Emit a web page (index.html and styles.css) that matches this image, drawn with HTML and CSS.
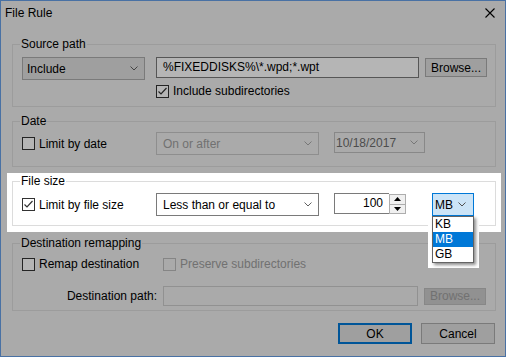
FILE: index.html
```html
<!DOCTYPE html>
<html>
<head>
<meta charset="utf-8">
<title>File Rule</title>
<link rel="stylesheet" href="styles.css">
</head>
<body>
<div class="window">
  <div class="titlebar">
    <span class="title">File Rule</span>
    <svg class="close" width="10" height="10" viewBox="0 0 10 10"><path d="M0.5 0.5 L9.5 9.5 M9.5 0.5 L0.5 9.5" stroke="#000" stroke-width="1.1" fill="none"/></svg>
  </div>

  <div class="group g-source">
    <div class="legend">Source path</div>
    <div class="row r-src1">
      <div class="combo c-include"><span>Include</span><svg class="chev" width="8" height="5" viewBox="0 0 8 5"><path d="M0.5 0.5 L4 4 L7.5 0.5" stroke="#606060" fill="none"/></svg></div>
      <div class="textbox t-path">%FIXEDDISKS%\*.wpd;*.wpt</div>
      <div class="button b-browse">Browse...</div>
    </div>
    <div class="row r-src2">
      <div class="check c-subdirs"><span class="box"><svg width="11" height="11" viewBox="0 0 11 11"><path d="M1.5 5.5 L4 8 L9.5 2" stroke="#333" stroke-width="1.2" fill="none"/></svg></span><span>Include subdirectories</span></div>
    </div>
  </div>

  <div class="group g-date">
    <div class="legend">Date</div>
    <div class="row r-date">
      <div class="check c-first"><span class="box"></span><span>Limit by date</span></div>
      <div class="combo c-cond disabled"><span>On or after</span><svg class="chev" width="8" height="5" viewBox="0 0 8 5"><path d="M0.5 0.5 L4 4 L7.5 0.5" stroke="#a8a8a8" fill="none"/></svg></div>
      <div class="combo c-datepick"><span>10/18/2017</span><svg class="chev" width="8" height="5" viewBox="0 0 8 5"><path d="M0.5 0.5 L4 4 L7.5 0.5" stroke="#a8a8a8" fill="none"/></svg></div>
    </div>
  </div>

  <div class="spot">
    <div class="group g-size">
      <div class="legend">File size</div>
      <div class="row r-size">
        <div class="check c-first"><span class="box"><svg width="11" height="11" viewBox="0 0 11 11"><path d="M1.5 5.5 L4 8 L9.5 2" stroke="#333" stroke-width="1.2" fill="none"/></svg></span><span>Limit by file size</span></div>
        <div class="combo c-cond c-white"><span>Less than or equal to</span><svg class="chev" width="8" height="5" viewBox="0 0 8 5"><path d="M0.5 0.5 L4 4 L7.5 0.5" stroke="#606060" fill="none"/></svg></div>
        <div class="numbox"><span>100</span></div>
        <div class="spin">
          <div class="spin-half"><svg width="7" height="4" viewBox="0 0 7 4"><path d="M0 4 L3.5 0 L7 4 Z" fill="#000"/></svg></div>
          <div class="spin-half spin-bottom"><svg width="7" height="4" viewBox="0 0 7 4"><path d="M0 0 L3.5 4 L7 0 Z" fill="#000"/></svg></div>
        </div>
        <div class="combo c-unit"><span>MB</span><svg class="chev" width="8" height="5" viewBox="0 0 8 5"><path d="M0.5 0.5 L4 4 L7.5 0.5" stroke="#505050" fill="none"/></svg>
          <div class="dropdown">
            <div class="list">
              <div class="item">KB</div>
              <div class="item selected">MB</div>
              <div class="item">GB</div>
            </div>
          </div>
        </div>
      </div>
    </div>
  </div>

  <div class="group g-dest">
    <div class="legend">Destination remapping</div>
    <div class="row r-dest1">
      <div class="check c-remap"><span class="box"></span><span>Remap destination</span></div>
      <div class="check disabled"><span class="box"></span><span>Preserve subdirectories</span></div>
    </div>
    <div class="row r-dest2">
      <div class="field-label">Destination path:</div>
      <div class="textbox t-dest disabled"></div>
      <div class="button b-browse2 disabled">Browse...</div>
    </div>
  </div>

  <div class="buttons">
    <div class="button b-ok">OK</div>
    <div class="button b-cancel">Cancel</div>
  </div>
</div>
</body>
</html>
```

FILE: styles.css
```css
* { box-sizing: border-box; }
html, body { margin: 0; padding: 0; }
body {
  width: 506px;
  height: 357px;
  overflow: hidden;
  font-family: "Liberation Sans", Arial, sans-serif;
  font-size: 12px;
  color: #000;
  background: #f0f0f0;
}
.window {
  width: 506px;
  height: 357px;
  border: 1px solid #68a0e8;
  background: #f0f0f0;
}
.titlebar {
  height: 24px;
  display: flex;
  align-items: center;
  justify-content: space-between;
  padding: 0 10px 0 4px;
  line-height: 24px;
}
.close { display: block; }

.group {
  border: 1px solid #dcdcdc;
  margin: 0 9px 0 11px;
}
.legend {
  width: max-content;
  margin: -9px 0 0 7px;
  padding: 0 1px;
  line-height: 16px;
  background: #f0f0f0;
}
.row {
  display: flex;
  align-items: center;
  padding-left: 9px;
}

.g-source { margin-top: 19px; padding-bottom: 7px; }
.r-src1 { margin-top: 5px; height: 23px; align-items: flex-start; }
.r-src2 { margin-top: 3px; height: 16px; }

.g-date { margin-top: 14px; padding-bottom: 11px; }
.r-date { margin-top: 3px; height: 23px; align-items: flex-start; }

.spot {
  position: relative;
  z-index: 2;
  margin: 6px 0 0 6px;
  width: 494px;
  padding: 8px 5px 6px 5px;
  background: #fff;
  box-shadow: 0 0 0 1400px rgba(0, 0, 0, 0.29);
}
.spot .group { margin: 0; }
.spot .legend { background: #fff; }
.g-size { padding-bottom: 9px; }
.r-size { margin-top: 4px; height: 23px; align-items: flex-start; }

.g-dest { margin-top: 11px; padding-bottom: 4px; }
.r-dest1 { margin-top: 5px; height: 16px; }
.r-dest2 { margin-top: 14px; height: 20px; }

/* checkboxes */
.check {
  display: flex;
  align-items: center;
  height: 16px;
  white-space: nowrap;
}
.check .box {
  width: 13px;
  height: 13px;
  border: 1px solid #333;
  background: #fff;
  margin-right: 4px;
  display: flex;
  align-items: center;
  justify-content: center;
}
.check .box svg { display: block; }
.check.disabled { color: #a0a0a0; }
.check.disabled .box { border-color: #bcbcbc; background: #f0f0f0; }
.c-subdirs { margin-left: 134px; }
.c-first { width: 134px; align-self: center; }
.c-remap { width: 141px; }

/* combos */
.combo {
  position: relative;
  display: flex;
  align-items: center;
  justify-content: space-between;
  height: 23px;
  border: 1px solid #adadad;
  background: #e1e1e1;
  padding: 0 6px 0 4px;
  white-space: nowrap;
}
.chev { display: block; flex: none; }
.c-include { width: 123px; }
.c-cond { width: 163px; padding-left: 6px; }
.c-cond.disabled { background: #f0f0f0; border-color: #c8c8c8; color: #a0a0a0; }
.c-white { background: #fff; border-color: #7a7a7a; }
.c-datepick {
  width: 91px;
  height: 21px;
  margin-left: 15px;
  padding-left: 1px;
  background: #f0f0f0;
  border-color: #c0c0c0;
  color: #6d6d6d;
}
.c-unit {
  width: 42px;
  margin-left: 26px;
  padding: 0 7px 0 2px;
  background: #cce4f7;
  border-color: #0078d7;
}

/* dropdown list */
.dropdown {
  position: absolute;
  top: 22px;
  left: -5px;
  padding: 0 5px 5px 4px;
  background: #fff;
}
.list {
  width: 42px;
  border: 1px solid #646464;
  background: #fff;
  box-shadow: 2px 2px 3px rgba(0, 0, 0, 0.45);
}
.item {
  height: 15px;
  line-height: 15px;
  padding-left: 2px;
}
.item.selected { background: #0078d7; color: #fff; }

/* number box + spinner */
.numbox {
  width: 55px;
  height: 21px;
  margin-left: 15px;
  border: 1px solid #7a7a7a;
  border-right: none;
  background: #fff;
  text-align: right;
  padding-right: 6px;
  line-height: 19px;
}
.spin {
  width: 17px;
  height: 20px;
  margin-top: 1px;
  border: 1px solid #adadad;
  background: #f0f0f0;
  display: flex;
  flex-direction: column;
}
.spin-half {
  flex: 1;
  display: flex;
  align-items: center;
  justify-content: center;
}
.spin-half svg { display: block; }
.spin-bottom { border-top: 1px solid #adadad; }

/* text boxes */
.textbox {
  height: 21px;
  border: 1px solid #7a7a7a;
  background: #fff;
  padding-left: 6px;
  line-height: 19px;
  white-space: nowrap;
}
.t-path { width: 263px; margin-left: 11px; }
.t-dest { width: 255px; height: 20px; margin-left: 6px; }
.textbox.disabled { background: #f0f0f0; border-color: #cccccc; }
.field-label { width: 135px; text-align: right; }

/* buttons */
.button {
  display: flex;
  align-items: center;
  justify-content: center;
  border: 1px solid #adadad;
  background: #e1e1e1;
  white-space: nowrap;
}
.b-browse { width: 62px; height: 19px; margin-left: 6px; margin-top: 1px; }
.b-browse2 { width: 62px; height: 17px; margin-left: 6px; }
.button.disabled { background: #cccccc; border-color: #bfbfbf; color: #a0a0a0; }

.buttons {
  display: flex;
  justify-content: flex-end;
  gap: 9px;
  margin-top: 12px;
  padding-right: 10px;
}
.b-ok, .b-cancel { width: 74px; height: 21px; }
.b-ok { border: 2px solid #0078d7; }
```
